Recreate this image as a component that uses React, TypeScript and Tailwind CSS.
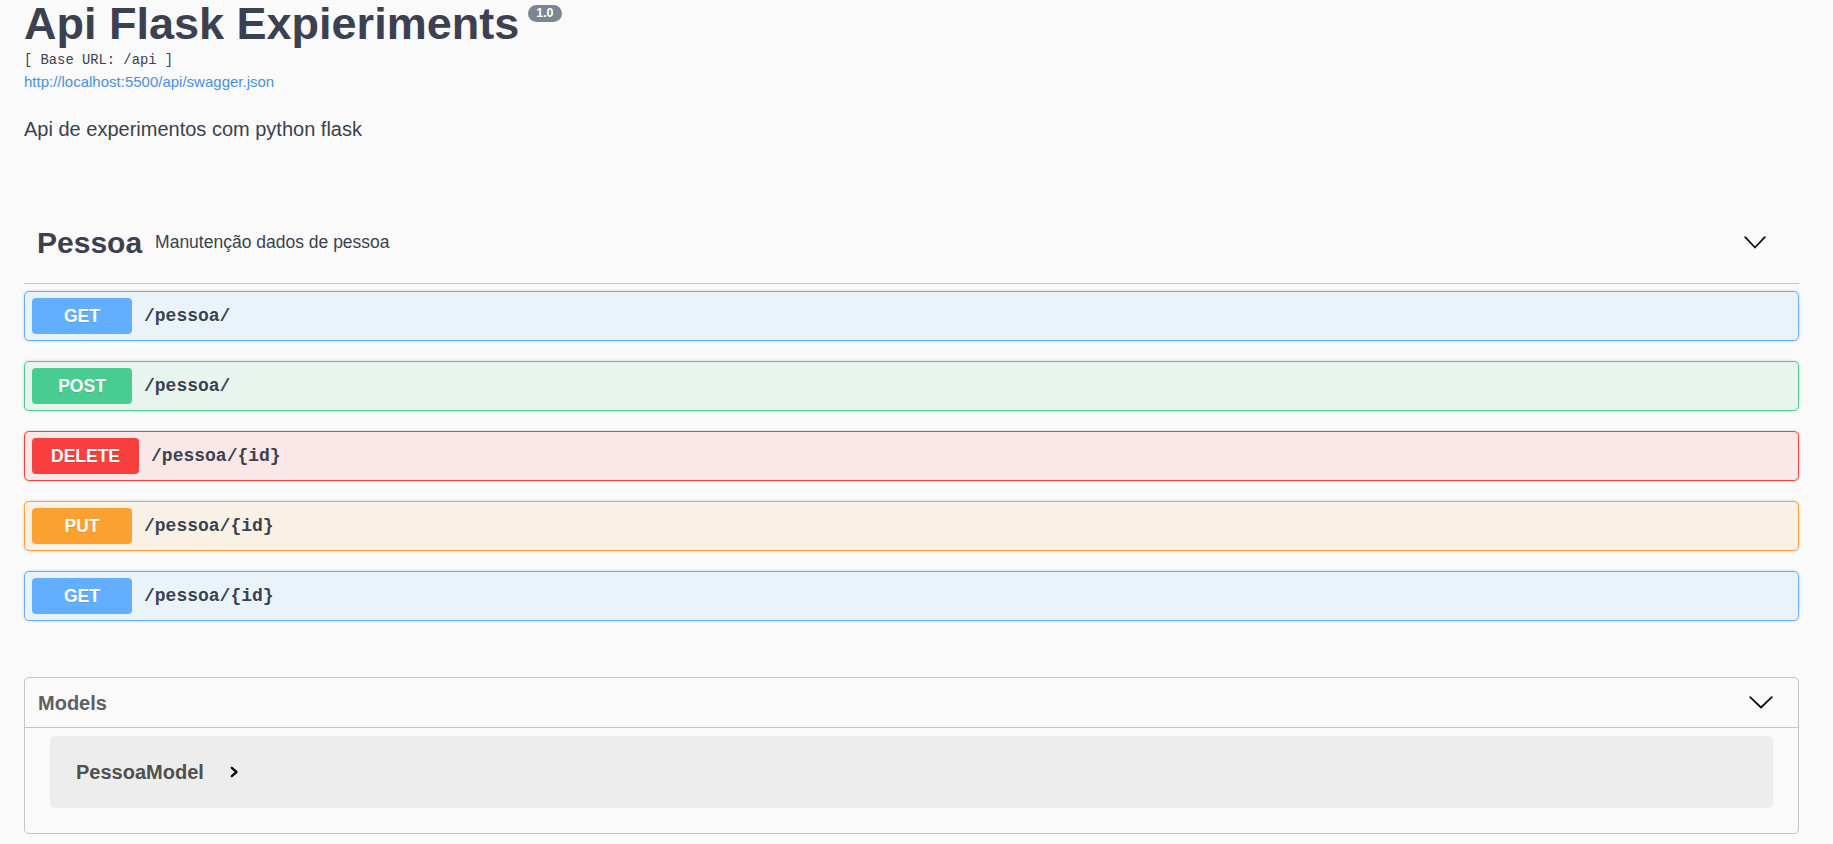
import React from "react";

const sans = { fontFamily: '"Liberation Sans", Arial, sans-serif' };

type Op = { method: string; path: string; badge: string; border: string; bg: string };

const ops: Op[] = [
  { method: "GET", path: "/pessoa/", badge: "bg-[#61affe]", border: "border-[#61affe]", bg: "bg-[#ebf3fa]" },
  { method: "POST", path: "/pessoa/", badge: "bg-[#49cc90]", border: "border-[#49cc90]", bg: "bg-[#e8f5ef]" },
  { method: "DELETE", path: "/pessoa/{id}", badge: "bg-[#f93e3e]", border: "border-[#f93e3e]", bg: "bg-[#fae7e7]" },
  { method: "PUT", path: "/pessoa/{id}", badge: "bg-[#fca130]", border: "border-[#fca130]", bg: "bg-[#faf1e6]" },
  { method: "GET", path: "/pessoa/{id}", badge: "bg-[#61affe]", border: "border-[#61affe]", bg: "bg-[#ebf3fa]" },
];

function ChevronDown({ w = 22, h = 13 }: { w?: number; h?: number }) {
  return (
    <svg width={w} height={h} viewBox={`0 0 ${w} ${h}`} fill="none">
      <path
        d={`M1.2 1.2 L${w / 2} ${h - 1.5} L${w - 1.2} 1.2`}
        stroke="#111"
        strokeWidth="1.8"
        strokeLinecap="round"
        strokeLinejoin="round"
      />
    </svg>
  );
}

export default function App() {
  return (
    <div className="min-h-screen bg-[#fafafa] pl-[24px] pr-[34px] text-[#3b4151]" style={sans}>
      {/* Info */}
      <div className="flex items-start">
        <h1 className="text-[45px] leading-[47px] font-bold text-[#3b4151] m-0">Api Flask Expieriments</h1>
        <span className="ml-[9px] mt-[5px] h-[17px] px-[8px] rounded-full bg-[#7d8492] text-white text-[12.5px] font-bold leading-[17px]">
          1.0
        </span>
      </div>
      <div className="mt-[5px] text-[13.8px] leading-[17px] text-[#3b4151]" style={{ fontFamily: '"Liberation Mono", monospace' }}>
        [ Base URL: /api ]
      </div>
      <div className="mt-[4px] text-[15px] leading-[17px] text-[#4990e2]">
        <a>http://localhost:5500/api/swagger.json</a>
      </div>
      <p className="mt-[28px] text-[20px] leading-[23px] text-[#3b4151]">Api de experimentos com python flask</p>

      {/* Tag */}
      <div className="mt-[61px] h-[82px] flex items-center border-b border-[#c4c5ca] pl-[13px] pr-[33px]">
        <span className="text-[30px] font-bold text-[#3b4151]">Pessoa</span>
        <span className="ml-[13px] text-[17.5px] text-[#3b4151]">Manutenção dados de pessoa</span>
        <div className="ml-auto flex items-center">
          <ChevronDown w={22} h={13} />
        </div>
      </div>

      <div className="mt-[7px] flex flex-col gap-[20px]">
        {ops.map((op, i) => (
          <div
            key={i}
            className={`h-[50px] flex items-center border ${op.border} ${op.bg} rounded-[5px] px-[7px] shadow-[0_0_3px_rgba(0,0,0,0.19)]`}
          >
            <span
              className={`h-[36px] min-w-[100px] px-[19px] flex items-center justify-center rounded-[4px] ${op.badge} text-white font-bold text-[17.5px] [text-shadow:0_1px_0_rgba(0,0,0,0.1)]`}
            >
              {op.method}
            </span>
            <span
              className="ml-[12px] text-[18px] font-bold text-[#3b4151]"
              style={{ fontFamily: '"Liberation Mono", monospace' }}
            >
              {op.path}
            </span>
          </div>
        ))}
      </div>

      {/* Models */}
      <section className="mt-[56px] border border-[#c4c5ca] rounded-[5px]">
        <div className="h-[50px] flex items-center border-b border-[#c4c5ca] pl-[13px] pr-[25px]">
          <span className="text-[20px] font-bold text-[#606060]">Models</span>
          <div className="ml-auto flex items-center">
            <ChevronDown w={24} h={13} />
          </div>
        </div>
        <div className="mt-[8px] mx-[25px] mb-[25px] h-[72px] rounded-[5px] bg-[#ededed] flex items-center pl-[26px]">
          <span className="text-[20px] font-bold text-[#505050]">PessoaModel</span>
          <svg className="ml-[26px]" width="9" height="12" viewBox="0 0 9 12" fill="none">
            <path d="M1.8 1.8 L6.5 6 L1.8 10.2" stroke="#111" strokeWidth="2.4" strokeLinecap="round" strokeLinejoin="round" />
          </svg>
        </div>
      </section>
    </div>
  );
}
